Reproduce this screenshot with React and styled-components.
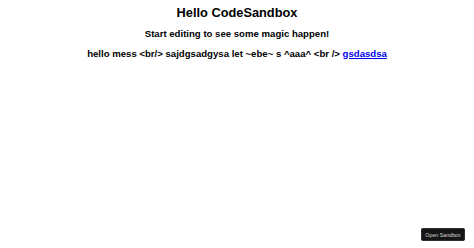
import React from "react";
import styled, { createGlobalStyle } from "styled-components";

const Global = createGlobalStyle`
  html, body { background: #ffffff; }
  body { margin: 0; font-family: "Liberation Sans", Arial, sans-serif; color: #000; }
`;

const AppWrap = styled.div`
  display: flex;
  flex-direction: column;
  align-items: center;
  gap: 8.3px;
  padding: 5px 3.2px 0;
  font-family: "Liberation Sans", Arial, sans-serif;
  text-align: center;
`;

const Title = styled.h1`
  font-size: 12.8px;
  font-weight: bold;
  margin: 0;
`;

const Subtitle = styled.h2`
  font-size: 9.6px;
  font-weight: bold;
  margin: 0;
`;

const Link = styled.a`
  color: #0000ee;
  text-decoration: underline;
`;

const OpenButton = styled.a`
  position: fixed;
  right: 9px;
  bottom: 7px;
  width: 44px;
  height: 13px;
  box-sizing: border-box;
  display: flex;
  align-items: center;
  justify-content: center;
  background: #151515;
  border: 1px solid #2e2e2e;
  border-radius: 1.6px;
  color: #d8d8d8;
  font-family: "Liberation Sans", Arial, sans-serif;
  font-size: 5.3px;
  text-decoration: none;
  white-space: nowrap;
`;

export default function App() {
  return (
    <>
      <Global />
      <AppWrap>
        <Title>Hello CodeSandbox</Title>
        <Subtitle>Start editing to see some magic happen!</Subtitle>
        <Subtitle>
          hello mess {"<br/>"} sajdgsadgysa let ~ebe~ s ^aaa^ {"<br />"}{" "}
          <Link href="#">gsdasdsa</Link>
        </Subtitle>
      </AppWrap>
      <OpenButton href="#">Open Sandbox</OpenButton>
    </>
  );
}
